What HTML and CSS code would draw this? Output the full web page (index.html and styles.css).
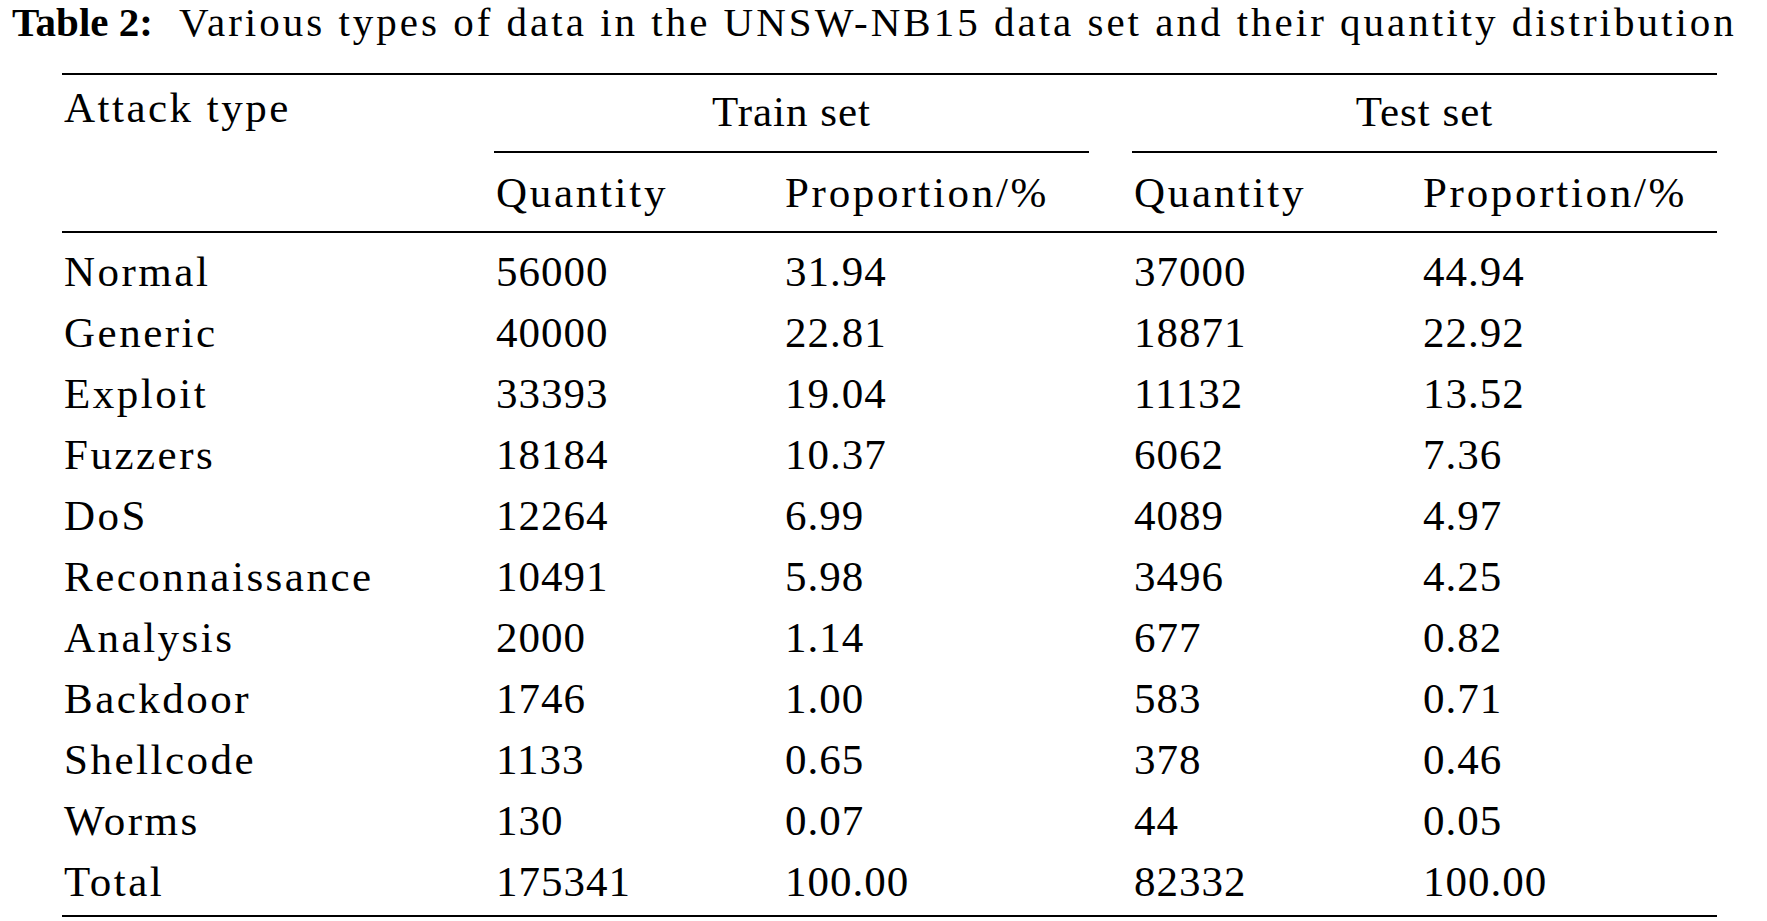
FILE: index.html
```html
<!DOCTYPE html>
<html lang="en">
<head>
    <meta charset="UTF-8">
    <meta name="viewport" content="width=device-width, initial-scale=1.0">
    <title>Table 2: UNSW-NB15 data distribution</title>
    <link rel="stylesheet" href="styles.css">
</head>
<body>
    <h1 class="caption"><span class="caption-label">Table 2:</span><span class="caption-text">Various types of data in the UNSW-NB15 data set and their quantity distribution</span></h1>

    <table class="data-table">
        <colgroup>
            <col class="col-type">
            <col class="col-qty">
            <col class="col-prop">
            <col class="col-qty">
            <col class="col-prop-last">
        </colgroup>
        <thead>
            <tr class="group-row">
                <th rowspan="2" class="type-head">Attack type</th>
                <th colspan="2" class="group-head train"><div class="group-title">Train set</div></th>
                <th colspan="2" class="group-head test"><div class="group-title">Test set</div></th>
            </tr>
            <tr class="sub-row">
                <th>Quantity</th>
                <th>Proportion/%</th>
                <th>Quantity</th>
                <th>Proportion/%</th>
            </tr>
        </thead>
        <tbody>
            <tr><td>Normal</td><td>56000</td><td>31.94</td><td>37000</td><td>44.94</td></tr>
            <tr><td>Generic</td><td>40000</td><td>22.81</td><td>18871</td><td>22.92</td></tr>
            <tr><td>Exploit</td><td>33393</td><td>19.04</td><td>11132</td><td>13.52</td></tr>
            <tr><td>Fuzzers</td><td>18184</td><td>10.37</td><td>6062</td><td>7.36</td></tr>
            <tr><td>DoS</td><td>12264</td><td>6.99</td><td>4089</td><td>4.97</td></tr>
            <tr><td>Reconnaissance</td><td>10491</td><td>5.98</td><td>3496</td><td>4.25</td></tr>
            <tr><td>Analysis</td><td>2000</td><td>1.14</td><td>677</td><td>0.82</td></tr>
            <tr><td>Backdoor</td><td>1746</td><td>1.00</td><td>583</td><td>0.71</td></tr>
            <tr><td>Shellcode</td><td>1133</td><td>0.65</td><td>378</td><td>0.46</td></tr>
            <tr><td>Worms</td><td>130</td><td>0.07</td><td>44</td><td>0.05</td></tr>
            <tr><td>Total</td><td>175341</td><td>100.00</td><td>82332</td><td>100.00</td></tr>
        </tbody>
    </table>
</body>
</html>
```

FILE: styles.css
```css
body {
    margin: 0;
    background-color: #fff;
    color: #000;
    font-family: "Liberation Serif", "Times New Roman", serif;
}

.caption {
    margin: 0;
    padding-left: 12px;
    font-size: 41px;
    line-height: 44px;
    font-weight: normal;
    white-space: nowrap;
}

.caption-label {
    font-weight: bold;
}

.caption-text {
    margin-left: 26px;
    letter-spacing: 3px;
}

.data-table {
    margin: 29px 0 0 62px;
    width: 1655px;
    table-layout: fixed;
    border-collapse: separate;
    border-spacing: 0;
    font-size: 43px;
}

.col-type { width: 432px; }
.col-qty { width: 289px; }
.col-prop { width: 349px; }
.col-prop-last { width: 296px; }

th {
    font-weight: normal;
    text-align: left;
    padding: 0 0 0 2px;
}

/* header */
.type-head {
    vertical-align: top;
    padding-top: 8px;
    line-height: 50px;
    letter-spacing: 2.5px;
    border-top: 2px solid #000;
    border-bottom: 2px solid #000;
}

.group-head {
    padding: 0;
    text-align: center;
    border-top: 2px solid #000;
}

.group-title {
    padding: 12px 0 14px;
    line-height: 50px;
    letter-spacing: 1px;
    border-bottom: 2px solid #000;
}

.group-head.train .group-title {
    margin-right: 43px;
}

.sub-row th {
    padding: 15px 0 13px 2px;
    line-height: 50px;
    letter-spacing: 2.7px;
    border-bottom: 2px solid #000;
}

/* body rows */
tbody td {
    padding: 0 0 0 2px;
    line-height: 61px;
    letter-spacing: 1px;
    white-space: nowrap;
}

tbody td:first-child {
    letter-spacing: 2.5px;
}

tbody tr:first-child td {
    padding-top: 8px;
}

tbody tr:last-child td {
    padding-bottom: 3px;
    border-bottom: 2px solid #000;
}
```
